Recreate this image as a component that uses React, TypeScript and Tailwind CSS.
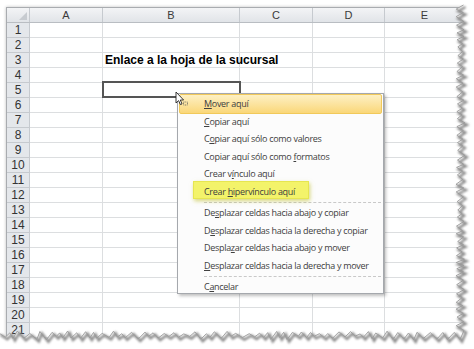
import React from 'react'

const cols = [
  { label: 'A', w: 73 },
  { label: 'B', w: 137 },
  { label: 'C', w: 73 },
  { label: 'D', w: 72 },
  { label: 'E', w: 80 },
]

const rows = Array.from({ length: 21 }, (_, i) => i + 1)

type Item = { pre: string; u: string; post: string; hl?: 'menu' | 'yellow' } | 'sep'

const items: Item[] = [
  { pre: '', u: 'M', post: 'over aquí', hl: 'menu' },
  { pre: '', u: 'C', post: 'opiar aquí' },
  { pre: 'C', u: 'o', post: 'piar aquí sólo como valores' },
  { pre: 'Copiar aquí sólo como ', u: 'f', post: 'ormatos' },
  { pre: 'Crear v', u: 'í', post: 'nculo aquí' },
  { pre: 'Crear ', u: 'h', post: 'ipervínculo aquí', hl: 'yellow' },
  'sep',
  { pre: 'De', u: 's', post: 'plazar celdas hacia abajo y copiar' },
  { pre: 'D', u: 'e', post: 'splazar celdas hacia la derecha y copiar' },
  { pre: 'Despla', u: 'z', post: 'ar celdas hacia abajo y mover' },
  { pre: '', u: 'D', post: 'esplazar celdas hacia la derecha y mover' },
  'sep',
  { pre: 'C', u: 'a', post: 'ncelar' },
]

// deterministic jitter for the torn paper edge
function tornEdge() {
  let seed = 7
  const rnd = () => {
    seed = (seed * 9301 + 49297) % 233280
    return seed / 233280
  }
  const right: [number, number][] = []
  for (let y = 5, i = 0; y < 334; y += 3 + rnd() * 2, i++) {
    right.push([i % 2 ? 456 + rnd() * 2 : 462 + rnd() * 3, y])
  }
  const bottom: [number, number][] = []
  for (let x = 460, i = 0; x > -2; x -= 3 + rnd() * 4, i++) {
    bottom.push([x, i % 2 ? 331 + rnd() * 3 : 336 + rnd() * 4])
  }
  const pts = [...right, ...bottom]
  const line = pts.map(([x, y], i) => `${i ? 'L' : 'M'}${x.toFixed(1)} ${y.toFixed(1)}`).join(' ')
  const cover = `M474 0 L458 0 ${line.replace('M', 'L')} L0 349 L474 349 Z`
  return { line, cover }
}

const edge = tornEdge()

export default function App() {
  return (
    <div className="relative w-[474px] h-[349px] bg-white overflow-hidden" style={{ fontFamily: '"Liberation Sans", Arial, sans-serif' }}>
      {/* Sheet */}
      <div className="ml-[6px] mt-[7px] w-[462px] border-l border-t border-[#a9acb0] shadow-[0_0_3px_rgba(0,0,0,0.25)]">
        {/* column headers */}
        <div className="flex h-[15px] bg-gradient-to-b from-[#f3f4f6] to-[#e1e4e8] border-b border-[#b9bdc2]">
          <div className="w-[23px] shrink-0 border-r border-[#c6cacf] relative">
            <div className="absolute right-[2px] bottom-[2px] w-0 h-0 border-l-[8px] border-l-transparent border-b-[8px] border-b-[#c7cbd0]" />
          </div>
          {cols.map((c) => (
            <div key={c.label} style={{ width: c.w }} className="shrink-0 border-r border-[#c6cacf] flex items-center justify-center text-[11px] text-[#3a3a3a] leading-none">
              {c.label}
            </div>
          ))}
        </div>
        {rows.map((r) => (
          <div key={r} className="flex h-[15px]">
            <div className="w-[23px] shrink-0 bg-[#e4e7eb] border-r border-b border-[#c6cacf] flex items-center justify-center text-[12px] text-[#333] leading-none">
              {r}
            </div>
            {cols.map((c) => (
              <div key={c.label} style={{ width: c.w }} className="shrink-0 border-r border-b border-[#dcdee0] relative">
                {r === 3 && c.label === 'B' && (
                  <span className="absolute left-[2px] top-[1px] text-[12px] font-bold text-black whitespace-nowrap leading-[13px]">
                    Enlace a la hoja de la sucursal
                  </span>
                )}
              </div>
            ))}
          </div>
        ))}
      </div>

      {/* Active cell B5 */}
      <div className="absolute left-[102px] top-[81px] w-[139px] h-[17px] border-2 border-[#555]" />

      {/* Context menu */}
      <div
        className="absolute left-[177px] top-[93px] w-[207px] h-[201px] bg-[#fcfcfc] border border-[#a5a8ad] shadow-[2px_2px_3px_rgba(0,0,0,0.25)] pt-[1px] text-[#404040]"
        style={{ fontFamily: '"Open Sans", "Noto Sans", sans-serif' }}
      >
        {items.map((it, i) =>
          it === 'sep' ? (
            <div key={i} className="h-[4px] flex items-center pl-[26px] pr-[2px]">
              <div className="w-full border-t border-dashed border-[#c9c9c9]" />
            </div>
          ) : (
            <div key={i} className="relative h-[17.5px] flex items-center pl-[26px] text-[9px] tracking-[-0.3px] whitespace-nowrap">
              {it.hl === 'menu' && (
                <div className="absolute left-[1px] right-[1px] top-[-1px] bottom-[-1px] rounded-[2px] border border-[#f1c95a] bg-gradient-to-b from-[#fdf0c3] to-[#fad778]" />
              )}
              {it.hl === 'yellow' && (
                <div className="absolute left-[15px] w-[116px] top-[-2px] h-[18px] bg-[#f3f36a] border border-[#e6e650] shadow-[1px_2px_4px_rgba(190,190,40,0.6)]" />
              )}
              <span className="relative">
                {it.pre}
                <span className="underline underline-offset-[1px]">{it.u}</span>
                {it.post}
              </span>
            </div>
          )
        )}
      </div>

      {/* Mouse cursor */}
      <svg className="absolute left-[175px] top-[91px]" width="14" height="16" viewBox="0 0 14 16">
        <path d="M1 1 L1 12 L3.6 9.6 L5.4 13.6 L7 12.9 L5.3 9 L8.6 9 Z" fill="#fff" stroke="#222" strokeWidth="0.9" strokeLinejoin="round" />
        <rect x="8.5" y="11" width="4" height="3" fill="none" stroke="#555" strokeWidth="0.7" strokeDasharray="1 0.7" />
      </svg>

      {/* Torn paper edge */}
      <svg className="absolute inset-0 pointer-events-none" width="474" height="349" viewBox="0 0 474 349">
        <defs>
          <filter id="blur" x="-10%" y="-10%" width="120%" height="120%">
            <feGaussianBlur stdDeviation="1.2" />
          </filter>
        </defs>
        <path d={edge.cover} fill="#fff" />
        <path d={edge.line} fill="none" stroke="#8c8c8c" strokeWidth="2.5" transform="translate(2 2)" filter="url(#blur)" />
        <path d={edge.line} fill="none" stroke="#9a9a9a" strokeWidth="0.9" />
      </svg>
    </div>
  )
}
